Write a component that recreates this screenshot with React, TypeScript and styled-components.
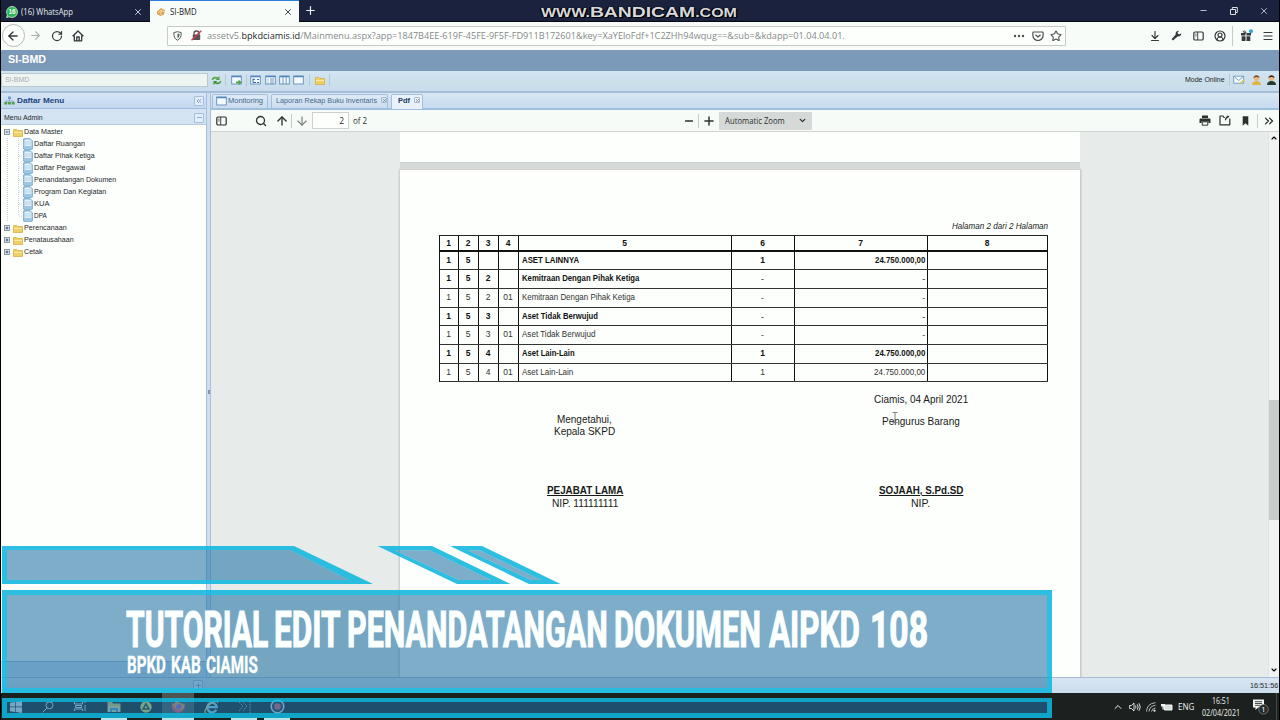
import React, { ReactNode, useLayoutEffect, useRef, useState } from 'react';
import styled, { createGlobalStyle } from 'styled-components';
import {
  ArrowDown, ArrowLeft, ArrowRight, ArrowUp, ChevronDown, ChevronUp, ChevronsLeft, ChevronsRight,
  Menu, Minus, Plus, RotateCw, Search, Star, X, ArrowDownToLine, CircleUserRound,
} from 'lucide-react';

const GlobalStyle = createGlobalStyle`
  * { box-sizing: border-box; }
  html, body { margin: 0; padding: 0; background: #000; }
  body { width: 1280px; height: 720px; overflow: hidden; font-family: "Liberation Sans", Arial, sans-serif; }
  svg { display: block; flex: none; }
`;

/* ---------- shared parts ---------- */

const FitBox = styled.span<{ $w: number }>`
  display: inline-block;
  flex: none;
  width: ${p => p.$w}px;
  white-space: nowrap;
  text-align: left;
`;
const FitInner = styled.span`
  display: inline-block;
  transform-origin: 0 50%;
`;

function Fit({ w, children }: { w: number; children: ReactNode }) {
  const ref = useRef<HTMLSpanElement>(null);
  const [scale, setScale] = useState(1);
  useLayoutEffect(() => {
    if (ref.current && ref.current.offsetWidth) setScale(w / ref.current.offsetWidth);
  }, [w]);
  return (
    <FitBox $w={w}>
      <FitInner ref={ref} style={{ transform: `scaleX(${scale})` }}>{children}</FitInner>
    </FitBox>
  );
}

const Slot = styled.div<{ $w: number; $ml?: number }>`
  flex: none;
  display: flex;
  align-items: center;
  justify-content: center;
  width: ${p => p.$w}px;
  margin-left: ${p => p.$ml ?? 0}px;
`;
const Divider = styled.div<{ $ml?: number; $mr?: number; $h?: number; $color?: string }>`
  flex: none;
  width: 1px;
  height: ${p => p.$h ?? 14}px;
  margin-left: ${p => p.$ml ?? 0}px;
  margin-right: ${p => p.$mr ?? 0}px;
  background: ${p => p.$color ?? '#c3cccb'};
`;
const Push = styled.div`
  flex: 1;
`;

/* ---------- frame ---------- */

const Screen = styled.div`
  position: relative;
  width: 1280px;
  height: 720px;
  overflow: hidden;
  display: flex;
  flex-direction: column;
  padding: 0 1px;
  background: #000;
`;

const TitleBar = styled.div`
  position: relative;
  flex: none;
  display: flex;
  height: 22px;
  background: #1b223d;
  border-bottom: 1px solid #05070f;
  color: #eef2f6;
`;
const BrowserTab = styled.div<{ $active?: boolean }>`
  display: flex;
  align-items: center;
  width: 149px;
  height: 22px;
  font: 9px "Open Sans", sans-serif;
  background: ${p => (p.$active ? '#f7fcf8' : 'transparent')};
  color: ${p => (p.$active ? '#1c2024' : '#e6ebf0')};
  border-top: 1px solid ${p => (p.$active ? '#2a80d8' : 'transparent')};
`;
const Watermark = styled.div`
  position: absolute;
  left: 540px;
  top: 4px;
  line-height: 17px;
  font-weight: bold;
  font-size: 12px;
  color: #d5d8dd;
  text-shadow: 0 0 1px #000, 1px 1px 0 #000, -1px 0 0 #000;
  b { font-size: 14.5px; }
`;

const NavBar = styled.div`
  flex: none;
  display: flex;
  align-items: center;
  height: 28px;
  padding-bottom: 1px;
  background: #f7fcf8;
  color: #35393b;
`;
const BackButton = styled.div`
  display: flex;
  align-items: center;
  justify-content: center;
  width: 23px;
  height: 23px;
  border: 1px solid #b5bab8;
  border-radius: 50%;
  background: #fdfffd;
`;
const UrlBox = styled.div`
  display: flex;
  align-items: center;
  width: 899px;
  height: 20px;
  margin-left: 80px;
  background: #fdfffd;
  border: 1px solid #c6cbc8;
  border-radius: 1px;
  font: 9.5px "Open Sans", sans-serif;
  color: #858a89;
  b { font-weight: 500; color: #222628; }
`;

const AppHeader = styled.div`
  flex: none;
  height: 21px;
  padding-left: 7px;
  line-height: 19px;
  font-size: 11px;
  font-weight: bold;
  color: #fff;
  background: #7b99b9;
`;
const AppToolbar = styled.div`
  flex: none;
  display: flex;
  align-items: center;
  height: 22px;
  padding-bottom: 2px;
  background: linear-gradient(#d3e4f3, #cbdfe9 60%, #c9dcee);
  border-bottom: 2px solid #a5bdd6;
`;
const SearchField = styled.div`
  width: 207px;
  height: 14px;
  padding-left: 3px;
  line-height: 12px;
  font-size: 7.5px;
  color: #a9afb0;
  background: #eef4f2;
  border: 1px solid #b9c9d3;
`;
const SmallText = styled.span<{ $ml?: number; $bold?: boolean; $color?: string }>`
  margin-left: ${p => p.$ml ?? 0}px;
  font-size: 7.5px;
  line-height: 12px;
  font-weight: ${p => (p.$bold ? 'bold' : 'normal')};
  color: ${p => p.$color ?? '#25282b'};
`;

const Body = styled.div`
  flex: none;
  display: flex;
  height: 584px;
`;
const Sidebar = styled.div`
  flex: none;
  display: flex;
  flex-direction: column;
  width: 205px;
  background: #fcfffc;
`;
const SideHeader = styled.div`
  flex: none;
  display: flex;
  align-items: center;
  height: 16px;
  padding-right: 2px;
  background: linear-gradient(#d6e5f6, #c2d8ef);
  border-bottom: 1px solid #9dbcdf;
`;
const SubHeader = styled(SideHeader)`
  padding-top: 2px;
  background: #d5e4f3;
  border-bottom-color: #b4cbe0;
`;
const Tool = styled.div`
  display: flex;
  align-items: center;
  justify-content: center;
  width: 10px;
  height: 10px;
  color: #52779d;
  background: #e4eefa;
  border: 1px solid #a3bfdd;
  border-radius: 1px;
`;
const Tree = styled.div`
  flex: 1;
  padding-top: 1px;
`;
const TreeRow = styled.div`
  display: flex;
  align-items: center;
  height: 12px;
  padding-left: 3px;
`;
const SideFooter = styled.div`
  height: 16px;
  background: #d0e0f2;
  border-top: 1px solid #9dbcdf;
`;
const Splitter = styled.div`
  flex: none;
  display: flex;
  align-items: center;
  justify-content: center;
  width: 5px;
  background: #cfdff0;
  border-left: 1px solid #a4bfdf;
  border-right: 1px solid #a4bfdf;
  i { width: 2px; height: 4px; background: #8095ab; margin-top: 14px; }
`;
const Content = styled.div`
  flex: 1;
  display: flex;
  flex-direction: column;
`;
const TabStrip = styled.div`
  flex: none;
  display: flex;
  align-items: flex-end;
  gap: 3px;
  height: 17px;
  padding-left: 1px;
  background: linear-gradient(#d9e8f3, #c9dcf0 80%);
  border-bottom: 2px solid #9dbfe0;
`;
const DocTab = styled.div<{ $w: number; $active?: boolean }>`
  display: flex;
  align-items: center;
  width: ${p => p.$w}px;
  height: ${p => (p.$active ? 15 : 14)}px;
  padding-bottom: ${p => (p.$active ? 2 : 1)}px;
  margin-bottom: ${p => (p.$active ? -1 : 0)}px;
  border: 1px solid #a2bfdb;
  border-bottom: 0;
  border-radius: 2px 2px 0 0;
  background: ${p => (p.$active ? '#e9f2fb' : 'linear-gradient(#dfebf7, #cbdcee)')};
`;
const TabClose = styled.div<{ $ml: number }>`
  display: flex;
  align-items: center;
  justify-content: center;
  width: 6px;
  height: 6px;
  margin-left: ${p => p.$ml}px;
  margin-bottom: 2px;
  border: 1px solid #a9bccf;
  border-radius: 1px;
  color: #687c90;
`;

const PdfBar = styled.div`
  flex: none;
  display: flex;
  align-items: center;
  height: 22px;
  color: #2c302f;
  background: #f7fbf7;
  border-bottom: 1px solid #cfd4d2;
  font: 8.5px "Open Sans", sans-serif;
`;
const PageField = styled.div`
  width: 37px;
  height: 17px;
  margin-left: 1px;
  padding-right: 4px;
  text-align: right;
  line-height: 15px;
  background: #fdfffd;
  border: 1px solid #cdd2cf;
`;
const ZoomSelect = styled.div`
  display: flex;
  align-items: center;
  width: 93px;
  height: 18px;
  margin-left: 1px;
  padding-left: 6px;
  background: #d5d9d7;
`;
const Viewer = styled.div`
  flex: none;
  display: flex;
  height: 545px;
`;
const Canvas = styled.div`
  flex: 1;
  overflow: hidden;
  padding-left: 189px;
  background: #e7ecea;
`;
const FirstPage = styled.div`
  width: 680px;
  height: 31px;
  background: #fcfffb;
  border-bottom: 1px solid #ccd1ce;
`;
const Page = styled.div`
  width: 680px;
  height: 510px;
  margin-top: 6px;
  padding: 50px 32px 0 39px;
  color: #181a19;
  background: #fcfffb;
  border-top: 1px solid #cdd2cf;
  box-shadow: 0 -6px 0 #d6dad8, 1px 0 2px #b9bebc, -1px 0 2px #c3c8c6;
`;
const PageLabel = styled.div`
  height: 15px;
  line-height: 13px;
  text-align: right;
  font-size: 8.5px;
  font-style: italic;
`;
const Scrollbar = styled.div`
  display: flex;
  flex-direction: column;
  align-items: center;
  width: 11px;
  padding: 2px 0 2px 0;
  background: #f0f3f0;
  border-left: 1px solid #dce3ea;
`;
const Thumb = styled.div`
  width: 10px;
  height: 120px;
  margin-top: 258px;
  margin-bottom: 146px;
  background: #c8ccc8;
`;

const Table = styled.div`
  width: 609px;
  border-left: 1px solid #141414;
  border-top: 1px solid #222;
`;
const TRow = styled.div<{ $h: number; $bold?: boolean; $head?: boolean }>`
  display: grid;
  grid-template-columns: 19px 20px 20px 20px 213px 63px 133px 120px;
  height: ${p => p.$h}px;
  line-height: ${p => p.$h - 2}px;
  font-size: 8.5px;
  font-weight: ${p => (p.$bold ? 'bold' : 'normal')};
  color: ${p => (p.$bold ? '#111' : '#333')};
  border-bottom: ${p => (p.$head ? '2px solid #111' : '1px solid #333')};
`;
const Cell = styled.div<{ $align?: string; $light?: boolean }>`
  text-align: ${p => p.$align ?? 'center'};
  ${p => p.$light && 'font-weight: normal; padding-top: 1px !important;'}
  padding: 0 ${p => (p.$align === 'right' ? 2 : p.$align ? 0 : 1)}px 0 ${p => (p.$align === 'left' ? 3 : 0)}px;
  border-right: 1px solid #111;
`;
const Signatures = styled.div`
  display: flex;
  padding-left: 56px;
  font-size: 10.5px;
  line-height: 12px;
`;
const Signer = styled.div<{ $w: number; $pt: number; $ml?: number }>`
  display: flex;
  flex-direction: column;
  align-items: center;
  width: ${p => p.$w}px;
  padding-top: ${p => p.$pt}px;
  margin-left: ${p => p.$ml ?? 0}px;
`;
const SignLine = styled.div<{ $mt?: number; $name?: boolean }>`
  height: 12px;
  margin-top: ${p => p.$mt ?? 0}px;
  font-weight: ${p => (p.$name ? 'bold' : 'normal')};
  text-decoration: ${p => (p.$name ? 'underline' : 'none')};
  span { text-decoration: inherit; }
`;
const TextCursor = styled.div`
  position: absolute;
  left: 892px;
  top: 412px;
`;

const StatusBar = styled.div`
  flex: none;
  display: flex;
  align-items: center;
  justify-content: flex-end;
  height: 16px;
  padding-right: 1px;
  background: linear-gradient(#d8e5f2, #cbdcec);
  border-top: 1px solid #a5bdd6;
`;
const ExpandTool = styled(Tool)`
  position: absolute;
  left: 193px;
  top: 680px;
`;
const TaskBar = styled.div`
  flex: none;
  display: flex;
  align-items: stretch;
  height: 27px;
  background: #1c211f;
  color: #edf1ef;
  font: 8.5px "Open Sans", sans-serif;
`;
const TaskItem = styled.div<{ $w: number; $open?: boolean; $active?: boolean; $bar?: number }>`
  position: relative;
  display: flex;
  align-items: center;
  justify-content: center;
  width: ${p => p.$w}px;
  background: ${p => (p.$active ? '#4d5451' : 'transparent')};
  &::after {
    content: '';
    position: absolute;
    bottom: 0;
    left: calc(50% - ${p => (p.$bar ?? 0) / 2}px);
    width: ${p => p.$bar ?? 0}px;
    height: 2px;
    background: #b9e2ea;
  }
`;
const Clock = styled.div`
  display: flex;
  flex-direction: column;
  align-items: center;
  justify-content: center;
  width: 46px;
  margin-left: 4px;
  line-height: 12px;
`;

/* ---------- lower third banner ---------- */

const Banner = styled.div`
  position: absolute;
  left: 2px;
  top: 546px;
  width: 1050px;
`;
const glass = 'rgba(33,114,163,0.58)';
const edge = 'rgba(15,182,222,0.88)';
const TitlePanel = styled.div`
  height: 103px;
  margin-top: 6px;
  padding: 13px 0 0 119px;
  color: #fbfffe;
  font-family: Roboto, sans-serif;
  font-weight: bold;
  background: ${glass};
  background-clip: padding-box;
  border: 5px solid ${edge};
`;
const BannerTitle = styled.div`
  display: flex;
  height: 44px;
  line-height: 44px;
  font-size: 50px;
  -webkit-text-stroke: 1.2px #fbfffe;
`;
const BannerWord = styled.span<{ $gap: number }>`
  margin-right: ${p => p.$gap}px;
`;
const BannerSub = styled.div`
  display: flex;
  gap: 5px;
  height: 26px;
  line-height: 26px;
  padding-left: 1px;
  font-size: 24.5px;
  -webkit-text-stroke: 0.4px #fbfffe;
`;
const FootPanel = styled.div`
  height: 20px;
  margin-top: 5px;
  background: ${glass};
  background-clip: padding-box;
  border: 5px solid ${edge};
  border-width: 4px 5px 5px;
`;

/* ---------- drawings ---------- */

const FolderIcon = () => (
  <svg width="10" height="9" viewBox="0 0 10 9">
    <path d="M.5 1.5h3.2l1 1h4.8v6h-9z" fill="#f1cf62" stroke="#d3a53c" strokeWidth=".7" />
    <path d="M1 4h8v1H1z" fill="#fbe9a6" />
  </svg>
);
const SheetIcon = () => (
  <svg width="10" height="12" viewBox="0 0 10 12">
    <path d="M.8.8h6.4l2 2v8.4H.8z" fill="#e2f0fb" stroke="#4f8cbb" strokeWidth=".9" />
    <path d="M2 4h6M2 6h6" stroke="#a7cbe6" strokeWidth=".8" />
    <path d="M1.3 8h7.4v2.8H1.3z" fill="#9cc5e4" />
  </svg>
);
const NodeBox = ({ open }: { open?: boolean }) => (
  <svg width="6" height="6" viewBox="0 0 6 6">
    <rect x=".5" y=".5" width="5" height="5" fill="#e9edf0" stroke="#71808e" strokeWidth=".8" />
    <path d={open ? 'M1.5 3h3' : 'M1.5 3h3M3 1.5v3'} stroke="#2e4a68" strokeWidth=".9" />
  </svg>
);
const Branch = ({ last }: { last?: boolean }) => (
  <svg width="19" height="12" viewBox="0 0 19 12">
    <path d={`M3.5 0v12M14.5 0v${last ? 6 : 12}M15 6h4`} fill="none" stroke="#c0c4c2" strokeWidth=".8" strokeDasharray="1 1" />
  </svg>
);
const WindowIcon = ({ kind = 'plain' }: { kind?: string }) => (
  <svg width="11" height="10" viewBox="0 0 11 10">
    <rect x=".7" y="1" width="9.6" height="8" fill="#f4f9fd" stroke="#5e8cba" strokeWidth=".9" />
    <path d="M.7 1.600h9.6" stroke="#4f86c0" strokeWidth="1.300" />
    {kind === 'go' && <path d="M5 6.500h2.600V4.700L10.800 7.300 7.600 9.900V8.200H5z" fill="#4aa13f" />}
    {kind === 'tree' && <path d="M3 3.500v4h3M3 4.500h2M7 4.500h2M7 7.500h2" fill="none" stroke="#3b6d9d" />}
    {kind === 'list' && <path d="M2.500 4h1M2.500 6h1M2.500 8h1M5 4h4M5 6h4M5 8h4" stroke="#6a8db2" strokeWidth=".9" />}
    {kind === 'cols' && <path d="M4 2v7M7.200 2v7" stroke="#5e8cba" strokeWidth=".9" />}
  </svg>
);
const SidebarIcon = ({ s = 11 }: { s?: number }) => (
  <svg width={s} height={s - 1} viewBox="0 0 11 10" fill="none" stroke="currentColor">
    <rect x=".8" y="1" width="9.400" height="8" rx="1.300" strokeWidth="1.200" />
    <path d="M4.700 1v8M2.300 3.200h1.200M2.300 4.900h1.200" strokeWidth=".9" />
  </svg>
);
const PersonIcon = ({ shirt, hair }: { shirt: string; hair: string }) => (
  <svg width="11" height="12" viewBox="0 0 11 12">
    <path d="M1 11c0-3 2-4 4.500-4s4.500 1 4.500 4z" fill={shirt} />
    <circle cx="5.500" cy="4.300" r="2.700" fill="#e9b983" />
    <path d="M2.500 4C2.300.3 8.700.3 8.500 4 7 2.700 4.500 2.600 2.500 4z" fill={hair} />
  </svg>
);

/* ---------- data ---------- */

const menuItems: [string, number][] = [
  ['Daftar Ruangan', 51], ['Daftar Pihak Ketiga', 61], ['Daftar Pegawai', 51],
  ['Penandatangan Dokumen', 82], ['Program Dan Kegiatan', 72], ['KUA', 15], ['DPA', 13],
];
const closedItems: [string, number][] = [['Perencanaan', 43], ['Penatausahaan', 50], ['Cetak', 19]];

const titleWords: [string, number, number][] = [
  ['TUTORIAL', 142, 6], ['EDIT', 67, 6], ['PENANDATANGAN', 261, 6], ['DOKUMEN', 147, 8], ['AIPKD', 91, 10], ['108', 58, 0],
];

type Row = { h: number; bold?: boolean; c: string[]; w: number; vw?: number };
const rows: Row[] = [
  { h: 18, bold: true, c: ['1', '5', '', '', 'ASET LAINNYA', '1', '24.750.000,00'], w: 57, vw: 50 },
  { h: 19, bold: true, c: ['1', '5', '2', '', 'Kemitraan Dengan Pihak Ketiga', '-', '-'], w: 117 },
  { h: 19, c: ['1', '5', '2', '01', 'Kemitraan Dengan Pihak Ketiga', '-', '-'], w: 113 },
  { h: 18, bold: true, c: ['1', '5', '3', '', 'Aset Tidak Berwujud', '-', '-'], w: 76 },
  { h: 19, c: ['1', '5', '3', '01', 'Aset Tidak Berwujud', '-', '-'], w: 73 },
  { h: 19, bold: true, c: ['1', '5', '4', '', 'Aset Lain-Lain', '1', '24.750.000,00'], w: 53, vw: 50 },
  { h: 18, c: ['1', '5', '4', '01', 'Aset Lain-Lain', '1', '24.750.000,00'], w: 51, vw: 51 },
];

/* ---------- sections ---------- */

function Browser() {
  return (
    <>
      <TitleBar>
        <BrowserTab>
          <Slot $w={13} $ml={4}>
            <svg width="12" height="12" viewBox="0 0 12 12">
              <path d="M6 .5a5.500 5.500 0 1 1-2.700 10.300L.6 11.500l.8-2.700A5.500 5.500 0 0 1 6 .5z" fill="#25b84f" stroke="#e9f7ec" strokeWidth=".8" />
              <text x="6" y="8.300" fontSize="6.500" fontWeight="bold" textAnchor="middle" fill="#fff" fontFamily="Liberation Sans">16</text>
            </svg>
          </Slot>
          <Slot $w={52} $ml={3}><Fit w={52}>(16) WhatsApp</Fit></Slot>
          <Slot $w={12} $ml={59}><X size={10} strokeWidth={2} /></Slot>
        </BrowserTab>
        <BrowserTab $active>
          <Slot $w={10} $ml={6}>
            <svg width="10" height="10" viewBox="0 0 10 10">
              <path d="M1 4.500 5 1l4 2.500-1 4L4.500 9 1 7z" fill="#dda04a" />
              <path d="M2 6l3-2.500L8.500 5M5 3.500V8" fill="none" stroke="#f8e5c0" strokeWidth=".9" />
            </svg>
          </Slot>
          <Slot $w={27} $ml={4}><Fit w={27}>SI-BMD</Fit></Slot>
          <Slot $w={12} $ml={85}><X size={10} strokeWidth={2} /></Slot>
        </BrowserTab>
        <Slot $w={12} $ml={5}><Plus size={13} strokeWidth={2.200} /></Slot>
        <Push />
        <Slot $w={30}><Minus size={9} /></Slot>
        <Slot $w={31}>
          <svg width="8" height="8" viewBox="0 0 8 8" fill="none" stroke="currentColor" strokeWidth=".9">
            <path d="M.5 2.500h5v5h-5zM2.300 2.300V.5h5v5H5.700" />
          </svg>
        </Slot>
        <Slot $w={30}><X size={10} strokeWidth={1.700} /></Slot>
        <Watermark><Fit w={196}>WWW.<b>BANDICAM</b>.COM</Fit></Watermark>
      </TitleBar>

      <NavBar>
        <Slot $w={24}><BackButton><ArrowLeft size={14} strokeWidth={2.300} /></BackButton></Slot>
        <Slot $w={21}><ArrowRight size={13} color="#a9adab" /></Slot>
        <Slot $w={22}><RotateCw size={12} strokeWidth={2.500} /></Slot>
        <Slot $w={19}>
          <svg width="12" height="12" viewBox="0 0 12 12" fill="none" stroke="currentColor" strokeWidth="1.300">
            <path d="M.6 6.300 6 1l5.400 5.300M2.300 5.500v5.300h7.400V5.500M4.800 10.800V7h2.400v3.800" strokeLinejoin="round" />
          </svg>
        </Slot>
        <UrlBox>
          <Slot $w={18}>
            <svg width="9" height="10" viewBox="0 0 9 10" fill="none" stroke="#55595a">
              <path d="M4.500.7l3.700.9c0 4-.7 6-3.700 7.700C1.500 7.600.8 5.600.8 1.600z" />
              <path d="M4.500 2.500v5C6 6.300 6.500 5 6.500 3z" fill="#55595a" stroke="none" />
            </svg>
          </Slot>
          <Slot $w={21}>
            <svg width="11" height="11" viewBox="0 0 11 11">
              <path d="M3 5V3.500a2.500 2.500 0 0 1 5 0V5" fill="none" stroke="#555" strokeWidth="1.300" />
              <rect x="1.800" y="4.500" width="7.400" height="5.500" rx=".7" fill="#555" />
              <path d="M.5 10.300 10.300.7" stroke="#d13a52" strokeWidth="1.400" />
            </svg>
          </Slot>
          <Fit w={638}>assetv5.<b>bpkdciamis.id</b>/Mainmenu.aspx?app=1847B4EE-619F-45FE-9F5F-FD911B172601&amp;key=XaYEloFdf+1C2ZHh94wqug==&amp;sub=&amp;kdapp=01.04.04.01.</Fit>
          <Push />
          <Slot $w={18}>
            <svg width="12" height="4" viewBox="0 0 12 4" fill="#4a4e4f">
              <circle cx="2" cy="2" r="1.200" /><circle cx="6" cy="2" r="1.200" /><circle cx="10" cy="2" r="1.200" />
            </svg>
          </Slot>
          <Slot $w={19}>
            <svg width="12" height="10" viewBox="0 0 12 10" fill="none" stroke="#4a4e4f" strokeWidth="1.200">
              <path d="M1.600 1h8.800q.7 0 .7.700V4.500a5.100 5 0 0 1-10.200 0V1.700q0-.7.700-.7zM3.500 3.800 6 6l2.500-2.200" strokeLinejoin="round" />
            </svg>
          </Slot>
          <Slot $w={18}><Star size={12} color="#4a4e4f" strokeWidth={2.200} /></Slot>
        </UrlBox>
        <Push />
        <Slot $w={22}><ArrowDownToLine size={12} strokeWidth={2.300} /></Slot>
        <Slot $w={21}>
          <svg width="11" height="11" viewBox="0 0 11 11">
            <path d="M10.300 3.300A3 3 0 0 1 6.600 6.500L2 10.500 .6 9.200 4.700 4.600A3 3 0 0 1 8 .8L6.600 2.400l.4 1.600 1.600.3z" fill="currentColor" />
          </svg>
        </Slot>
        <Slot $w={22}><SidebarIcon /></Slot>
        <Slot $w={21}><CircleUserRound size={12} strokeWidth={2.400} /></Slot>
        <Divider $ml={2} $mr={4} $h={20} />
        <Slot $w={20}>
          <svg width="14" height="13" viewBox="0 0 14 13">
            <path d="M1 4h4.500v2.500H1zM6.500 4H11v2.500H6.500zM1.700 7.300h3.800V12H1.700zM6.500 7.300h3.800V12H6.500z" fill="currentColor" />
            <path d="M6 4C4 4 2.800 3 3.500 2.200S5.500 2 6 4z" fill="none" stroke="currentColor" />
            <circle cx="11" cy="2.300" r="2" fill="#27a5dc" />
          </svg>
        </Slot>
        <Slot $w={22}><Menu size={12} strokeWidth={2.400} /></Slot>
      </NavBar>
    </>
  );
}

function AppBars() {
  return (
    <>
      <AppHeader><Fit w={38}>SI-BMD</Fit></AppHeader>
      <AppToolbar>
        <SearchField><Fit w={24}>SI-BMD</Fit></SearchField>
        <Slot $w={16}>
          <svg width="11" height="11" viewBox="0 0 11 11">
            <path d="M.7 5C1 2.200 4 1 7 2.500L8.500 1v4h-4L6 3.700C4 3 2.500 3.500 2 5z" fill="#4fa544" />
            <path d="M10.300 6C10 8.800 7 10 4 8.500L2.500 10V6h4L5 7.300C7 8 8.500 7.500 9 6z" fill="#3d9138" />
          </svg>
        </Slot>
        <Divider $ml={1} $h={12} $color="#b6cad6" />
        <Slot $w={20}><WindowIcon kind="go" /></Slot>
        <Divider $h={12} $color="#b6cad6" />
        <Slot $w={16}><WindowIcon kind="tree" /></Slot>
        <Slot $w={14}><WindowIcon kind="list" /></Slot>
        <Slot $w={14}><WindowIcon kind="cols" /></Slot>
        <Slot $w={15}><WindowIcon /></Slot>
        <Divider $ml={3} $h={12} $color="#b6cad6" />
        <Slot $w={19}><FolderIcon /></Slot>
        <Divider $h={12} $color="#b6cad6" />
        <Push />
        <SmallText><Fit w={40}>Mode Online</Fit></SmallText>
        <Divider $ml={4} $h={12} $color="#b6cad6" />
        <Slot $w={18}>
          <svg width="12" height="10" viewBox="0 0 12 10">
            <rect x=".7" y="1.200" width="10" height="7" fill="#f3f8fb" stroke="#6f9bc0" strokeWidth=".9" />
            <path d="M1 1.500 5.700 5.500l4.700-4" fill="none" stroke="#6f9bc0" strokeWidth=".9" />
            <path d="M7 8.500 11 5" stroke="#d9c04f" strokeWidth="1.500" />
          </svg>
        </Slot>
        <Slot $w={16}><PersonIcon shirt="#e2b346" hair="#7c4d22" /></Slot>
        <Slot $w={15}><PersonIcon shirt="#26382f" hair="#342418" /></Slot>
      </AppToolbar>
    </>
  );
}

function SideMenu() {
  return (
    <Sidebar>
      <SideHeader>
        <Slot $w={12} $ml={2}>
          <svg width="11" height="9" viewBox="0 0 11 9">
            <rect x="4" y=".5" width="3" height="2.500" fill="#6d9ccb" />
            <path d="M5.500 3v2M1.800 6V5h7.400v1" fill="none" stroke="#7793ad" strokeWidth=".7" />
            <path d="M.3 6h3v2.500h-3zM4 6h3v2.500H4zM7.700 6h3v2.500h-3z" fill="#55a04b" />
          </svg>
        </Slot>
        <SmallText $ml={2} $bold $color="#1d4480"><Fit w={47}>Daftar Menu</Fit></SmallText>
        <Push />
        <Tool><ChevronsLeft size={8} /></Tool>
      </SideHeader>
      <SubHeader>
        <SmallText $ml={3}><Fit w={39}>Menu Admin</Fit></SmallText>
        <Push />
        <Tool><Minus size={7} /></Tool>
      </SubHeader>
      <Tree>
        <TreeRow>
          <NodeBox open /><Slot $w={13} $ml={1}><FolderIcon /></Slot>
          <SmallText><Fit w={39}>Data Master</Fit></SmallText>
        </TreeRow>
        {menuItems.map(([name, w], i) => (
          <TreeRow key={name}>
            <Branch last={i === menuItems.length - 1} /><SheetIcon />
            <SmallText $ml={1}><Fit w={w}>{name}</Fit></SmallText>
          </TreeRow>
        ))}
        {closedItems.map(([name, w]) => (
          <TreeRow key={name}>
            <NodeBox /><Slot $w={13} $ml={1}><FolderIcon /></Slot>
            <SmallText><Fit w={w}>{name}</Fit></SmallText>
          </TreeRow>
        ))}
      </Tree>
      <SideFooter />
    </Sidebar>
  );
}

function PdfToolbar() {
  return (
    <PdfBar>
      <Slot $w={21}><SidebarIcon /></Slot>
      <Slot $w={20} $ml={19}><Search size={12} strokeWidth={2.600} /></Slot>
      <Slot $w={20} $ml={1}><ArrowUp size={14} strokeWidth={2.300} /></Slot>
      <Divider $ml={-1} />
      <Slot $w={19}><ArrowDown size={14} strokeWidth={2} color="#777c7a" /></Slot>
      <PageField>2</PageField>
      <Slot $w={14} $ml={4}><Fit w={14}>of 2</Fit></Slot>
      <Slot $w={18} $ml={313}><Minus size={12} strokeWidth={2.600} /></Slot>
      <Divider />
      <Slot $w={19}><Plus size={14} strokeWidth={2.500} /></Slot>
      <ZoomSelect>
        <Fit w={60}>Automatic Zoom</Fit>
        <Slot $w={12} $ml={11}><ChevronDown size={9} strokeWidth={3.500} /></Slot>
      </ZoomSelect>
      <Push />
      <Slot $w={20}>
        <svg width="12" height="11" viewBox="0 0 12 11" fill="currentColor">
          <path d="M3 .5h6V3H3zM1.500 3.500h9q1 0 1 1V8H9.500V6.500h-7V8H.5V4.500q0-1 1-1z" />
          <path d="M3.200 6.800h5.600v3.400H3.200z" fill="#f7fbf7" stroke="currentColor" />
        </svg>
      </Slot>
      <Slot $w={20}>
        <svg width="12" height="11" viewBox="0 0 12 11" fill="none" stroke="currentColor" strokeWidth="1.200">
          <path d="M5.800 2.500H5L4 1H1v8.800h9.800V3.500M6.500 5.200c0-2 .8-2.800 2.300-3.300" strokeLinejoin="round" />
          <path d="M7.700.5l2.700.6-1.700 2.300z" fill="currentColor" stroke="none" />
        </svg>
      </Slot>
      <Slot $w={20}><svg width="7" height="10" viewBox="0 0 7 10"><path d="M.7.3h5.600v9.400L3.500 7.200.7 9.700z" fill="currentColor" /></svg></Slot>
      <Divider $ml={2} />
      <Slot $w={21}><ChevronsRight size={14} strokeWidth={2.200} /></Slot>
    </PdfBar>
  );
}

function Document() {
  return (
    <Viewer>
      <Canvas>
        <FirstPage />
        <Page>
          <PageLabel><Fit w={96}>Halaman 2 dari 2 Halaman</Fit></PageLabel>
          <Table>
            <TRow $h={16} $bold $head>
              {['1', '2', '3', '4', '5', '6', '7', '8'].map(n => <Cell key={n}>{n}</Cell>)}
            </TRow>
            {rows.map((r, i) => (
              <TRow key={i} $h={r.h} $bold={r.bold}>
                {r.c.slice(0, 4).map((t, j) => <Cell key={j}>{t}</Cell>)}
                <Cell $align="left"><Fit w={r.w}>{r.c[4]}</Fit></Cell>
                <Cell $light={r.c[5] === '-'}>{r.c[5]}</Cell>
                <Cell $align="right" $light={r.c[6] === '-'}>{r.vw ? <Fit w={r.vw}>{r.c[6]}</Fit> : r.c[6]}</Cell>
                <Cell />
              </TRow>
            ))}
          </Table>
          <Signatures>
            <Signer $w={179} $pt={31}>
              <SignLine><Fit w={55}>Mengetahui,</Fit></SignLine>
              <SignLine><Fit w={61}>Kepala SKPD</Fit></SignLine>
              <SignLine $mt={47} $name><Fit w={76}>PEJABAT LAMA</Fit></SignLine>
              <SignLine $mt={1}><Fit w={66}>NIP. 111111111</Fit></SignLine>
            </Signer>
            <Signer $w={181} $pt={11} $ml={156}>
              <SignLine><Fit w={94}>Ciamis, 04 April 2021</Fit></SignLine>
              <SignLine $mt={10}><Fit w={78}>Pengurus Barang</Fit></SignLine>
              <SignLine $mt={57} $name><Fit w={84}>SOJAAH, S.Pd.SD</Fit></SignLine>
              <SignLine $mt={1}><Fit w={19}>NIP.</Fit></SignLine>
            </Signer>
          </Signatures>
        </Page>
      </Canvas>
      <Scrollbar>
        <ChevronUp size={8} strokeWidth={3.500} />
        <Thumb />
        <ChevronDown size={8} strokeWidth={3.500} />
      </Scrollbar>
    </Viewer>
  );
}

function Tasks() {
  return (
    <TaskBar>
      <TaskItem $w={30}>
        <svg width="12" height="12" viewBox="0 0 12 12" fill="#e8f2f5"><path d="M0 1.700l5-.7v4.600H0zM5.700.9 12 0v5.600H5.700zM0 6.300h5V11l-5-.7zM5.700 6.300H12V12l-6.300-.9z" /></svg>
      </TaskItem>
      <TaskItem $w={33}>
        <svg width="12" height="12" viewBox="0 0 12 12" fill="none" stroke="#e8f2f5"><circle cx="7.500" cy="4.300" r="3.500" /><path d="M5 7 .7 11.300" /></svg>
      </TaskItem>
      <TaskItem $w={33}>
        <svg width="13" height="11" viewBox="0 0 13 11" fill="none" stroke="#e8f2f5"><path d="M.5 1v2h8V1M.5 10V8h8v2M1.500 4.500h6v2h-6zM11 0v2M11 4v6" /></svg>
      </TaskItem>
      <TaskItem $w={33} $bar={26}>
        <svg width="14" height="12" viewBox="0 0 14 12"><path d="M.5 1H5l1 1.500h7.500V11H.5z" fill="#e9c967" /><path d="M1 5h12v6H1z" fill="#f4e2a0" /><path d="M3 7h8v4H9V9H5v2H3z" fill="#4aa4d9" /></svg>
      </TaskItem>
      <TaskItem $w={32}>
        <svg width="12" height="12" viewBox="0 0 12 12"><circle cx="6" cy="6" r="5.700" fill="#f2e65a" /><path d="M6 2.800l2.900 5.200H3.100z" fill="none" stroke="#1f3a37" strokeWidth="1.500" /></svg>
      </TaskItem>
      <TaskItem $w={32} $active $bar={32}>
        <svg width="15" height="15" viewBox="0 0 15 15">
          <path d="M13 3.500c2 4-.5 10-5.500 10S-.5 9 1.500 4c.7.500 1 .8 1.300 1.300C4 3 5.500 2 8.500 2c-1 .7-1 1.500-.5 2 2-.5 3.500.5 4 1.800.6-.6.9-1.300 1-2.300z" fill="#ff9a45" />
          <path d="M1.500 5c-1.500 5 2 8.500 6 8.500 4 0 6-3 6-6-2 4-6 4.500-8.500 2.500C3.500 8.800 2.500 7 1.500 5z" fill="#ff4b62" />
          <circle cx="7.800" cy="7.800" r="2.700" fill="#9c62cc" />
        </svg>
      </TaskItem>
      <TaskItem $w={34}>
        <svg width="15" height="14" viewBox="0 0 15 14" fill="none"><path d="M12.300 9.700A4.800 4.800 0 1 1 12.800 7.200H4" stroke="#8be0ff" strokeWidth="2.300" /><path d="M2 12.500C-1 13 2 5 11 1.500c2-.5 3 0 2.500 1.500" stroke="#ffdf68" strokeWidth="1.200" /></svg>
      </TaskItem>
      <TaskItem $w={32} $bar={26}>
        <svg width="13" height="12" viewBox="0 0 13 12" fill="none" stroke="#8aa6b5"><path d="M1 1l4 4-4 5M5 1l4 4-4 5M12 0v12" strokeDasharray="2 .7" /></svg>
      </TaskItem>
      <TaskItem $w={34} $bar={26}>
        <svg width="15" height="15" viewBox="0 0 15 15"><circle cx="7.500" cy="7.500" r="6.300" fill="#263442" stroke="#e4eef2" strokeWidth="1.500" /><circle cx="7.500" cy="7.500" r="3.300" fill="#f2586a" /></svg>
      </TaskItem>
      <Push />
      <Slot $w={16}><ChevronUp size={12} /></Slot>
      <Slot $w={17}>
        <svg width="12" height="10" viewBox="0 0 12 10" fill="none" stroke="currentColor" strokeWidth=".9"><path d="M.6 3.500h1.800L5 1v8L2.400 6.500H.6zM6.500 3.500q1 1.500 0 3M8.200 2.300q2 2.700 0 5.400M9.900 1.200q2.800 3.800 0 7.600" /></svg>
      </Slot>
      <Slot $w={16}>
        <svg width="10" height="10" viewBox="0 0 10 10" fill="none" stroke="#c2c9c6" strokeWidth=".9"><path d="M.5 9.500Q1 1.500 9.500.7M3 9.500Q3.500 4 9.500 3.300M5.500 9.500Q6 6.500 9.500 6" /><circle cx="8.500" cy="8.700" r=".8" fill="#fff" /></svg>
      </Slot>
      <Slot $w={16}>
        <svg width="12" height="8" viewBox="0 0 12 8"><path d="M3.500 2h7.500v5H3.500z" fill="#d8dedb" stroke="#f2f5f3" /><path d="M0 1h4v2.500H2.800V6.500H1.500V3.500H0z" fill="#f2f5f3" /></svg>
      </Slot>
      <Slot $w={16} $ml={3}><Fit w={16}>ENG</Fit></Slot>
      <Clock><Fit w={18}>16:51</Fit><Fit w={38}>02/04/2021</Fit></Clock>
      <Slot $w={22} $ml={5}>
        <svg width="17" height="17" viewBox="0 0 17 17">
          <path d="M1 1.500h11v8H6L3.500 12V9.500H1z" fill="#f4f7f5" />
          <path d="M3 3.700h7M3 5.500h7M3 7.300h5" stroke="#1c211f" strokeWidth=".8" />
          <circle cx="11.500" cy="11.300" r="4.800" fill="#252b29" stroke="#8c9390" strokeWidth=".7" />
          <text x="11.500" y="14" fontSize="7.500" textAnchor="middle" fill="#fff" fontFamily="Noto Sans">1</text>
        </svg>
      </Slot>
      <Divider $ml={5} $mr={2} $h={27} $color="#464c49" />
    </TaskBar>
  );
}

function LowerThird() {
  return (
    <Banner>
      <svg width="562" height="38" viewBox="2 546 562 38">
        <g fill={edge} fillRule="evenodd">
          <path d="M2 546H294L373 584H2zM7 550V580H349L290 550z" />
          <path d="M377.500 546H432L510.500 584H457zM395 550.500 459 580H491L430 550.500z" />
          <path d="M450 546H482L560.500 584H529zM468 550.500 531 580H541L480 550.500z" />
        </g>
        <g fill={glass}>
          <path d="M7 550V580H349L290 550z" />
          <path d="M395 550.500 459 580H491L430 550.500z" />
          <path d="M468 550.500 531 580H541L480 550.500z" />
        </g>
      </svg>
      <TitlePanel>
        <BannerTitle>
          {titleWords.map(([word, w, gap]) => (
            <BannerWord key={word} $gap={gap}><Fit w={w}>{word}</Fit></BannerWord>
          ))}
        </BannerTitle>
        <BannerSub><Fit w={39}>BPKD</Fit><Fit w={30}>KAB</Fit><Fit w={52}>CIAMIS</Fit></BannerSub>
      </TitlePanel>
      <FootPanel />
    </Banner>
  );
}

export default function App() {
  return (
    <>
      <GlobalStyle />
      <Screen>
        <Browser />
        <AppBars />
        <Body>
          <SideMenu />
          <Splitter><i /></Splitter>
          <Content>
            <TabStrip>
              <DocTab $w={56}>
                <Slot $w={11} $ml={3}><WindowIcon /></Slot>
                <SmallText $ml={1} $color="#44698e"><Fit w={35}>Monitoring</Fit></SmallText>
              </DocTab>
              <DocTab $w={117}>
                <SmallText $ml={4} $color="#44698e"><Fit w={101}>Laporan Rekap Buku Inventaris</Fit></SmallText>
                <TabClose $ml={4}><X size={5} strokeWidth={3} /></TabClose>
              </DocTab>
              <DocTab $w={32} $active>
                <SmallText $ml={6} $bold $color="#223b62"><Fit w={12}>Pdf</Fit></SmallText>
                <TabClose $ml={4}><X size={5} strokeWidth={3} /></TabClose>
              </DocTab>
            </TabStrip>
            <PdfToolbar />
            <Document />
          </Content>
        </Body>
        <StatusBar><SmallText><Fit w={28}>16:51:56</Fit></SmallText></StatusBar>
        <Tasks />
        <ExpandTool><Plus size={7} /></ExpandTool>
        <TextCursor>
          <svg width="6" height="11" viewBox="0 0 6 11" fill="none" stroke="#777"><path d="M.5.500h5M3 .5v10M.5 10.500h5" strokeWidth=".9" /></svg>
        </TextCursor>
        <LowerThird />
      </Screen>
    </>
  );
}
